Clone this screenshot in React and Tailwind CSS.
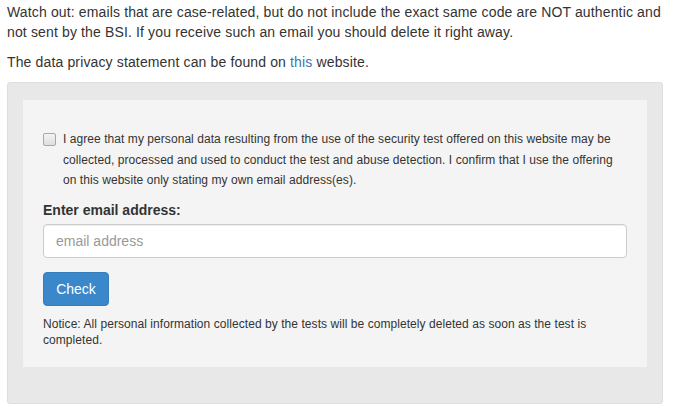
import React, { useState } from 'react'

export default function App() {
	const [agreed, setAgreed] = useState(false)
	const [email, setEmail] = useState('')

	return (
		<div
			className="w-[673px] h-[411px] overflow-hidden bg-white text-[#333] text-[14px] leading-[20px]"
			style={{ fontFamily: '"Liberation Sans", Arial, sans-serif' }}
		>
			<div className="pl-[7px] pr-[6px] pt-[2px]">
				<p className="mb-[10px] tracking-[0.14px]">
					Watch out: emails that are case-related, but do not include the exact same code are NOT
					authentic and not sent by the BSI. If you receive such an email you should delete it right
					away.
				</p>
				<p className="mb-[10px] tracking-[0.14px]">
					The data privacy statement can be found on{' '}
					<a href="#" className="text-[#3a76b0]">
						this
					</a>{' '}
					website.
				</p>

				<div className="w-[656px] bg-[#e8e8e8] border border-[#dedede] rounded-[3px] pt-[17px] pl-[15px] pr-[15px] pb-[36px]">
					<div className="bg-[#f4f4f4] pt-[29px] pl-[20px] pr-[19px] pb-[19px]">
						<label className="flex items-start text-[12px] leading-[20.5px] text-[#333]">
							<input
								type="checkbox"
								checked={agreed}
								onChange={(e) => setAgreed(e.target.checked)}
								className="appearance-none shrink-0 w-[13px] h-[13px] mt-[4px] mr-[7px] border border-[#a8a8a8] rounded-[2px] bg-[linear-gradient(#f3f3f3,#dedede)]"
							/>
							<span className="max-w-[556px] tracking-[0.06px]">
								I agree that my personal data resulting from the use of the security test offered on
								this website may be collected, processed and used to conduct the test and abuse
								detection. I confirm that I use the offering on this website only stating my own
								email address(es).
							</span>
						</label>

						<div className="mt-[9px] mb-[4px] text-[14px] leading-[20px] font-bold">
							Enter email address:
						</div>
						<input
							type="email"
							value={email}
							onChange={(e) => setEmail(e.target.value)}
							placeholder="email address"
							className="block w-[584px] h-[34px] px-[12px] bg-white border border-[#ccc] rounded-[4px] text-[14px] text-[#555] placeholder:text-[#999] shadow-[inset_0_1px_1px_rgba(0,0,0,0.075)] focus:outline-none"
						/>

						<button
							type="button"
							className="mt-[14px] h-[34px] w-[66px] bg-[#3a87c9] border border-[#357ebd] rounded-[4px] text-white text-[14px]"
						>
							Check
						</button>

						<p className="mt-[10px] text-[12px] leading-[16px] pr-[20px] tracking-[0.06px]">
							Notice: All personal information collected by the tests will be completely deleted as
							soon as the test is completed.
						</p>
					</div>
				</div>
			</div>
		</div>
	)
}
